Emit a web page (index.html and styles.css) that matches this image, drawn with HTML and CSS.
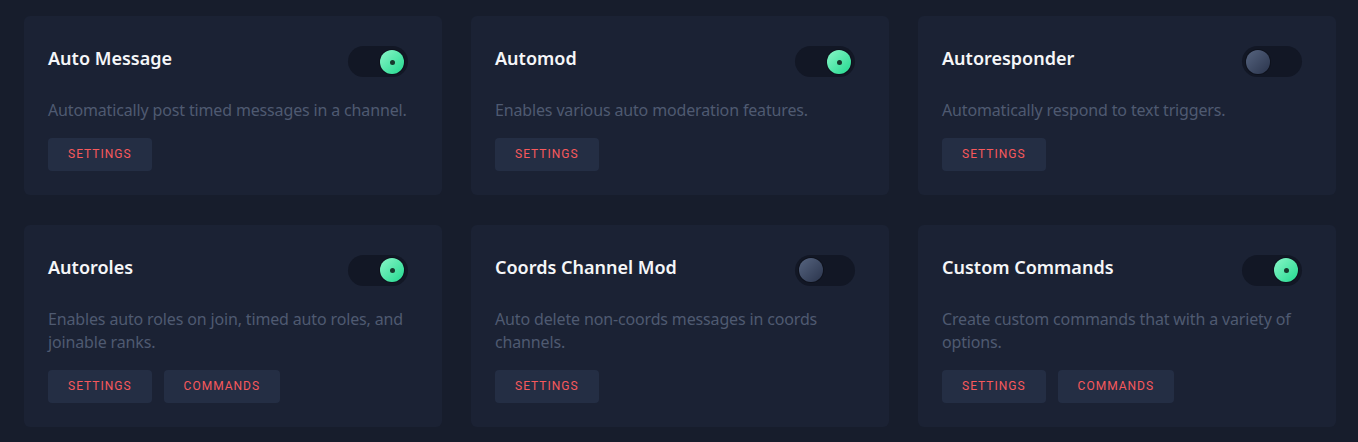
FILE: index.html
```html
<!DOCTYPE html>
<html lang="en">
<head>
<meta charset="utf-8">
<title>Plugins</title>
<link rel="stylesheet" href="styles.css">
</head>
<body>
<main class="grid">
  <section class="card">
    <div class="card-head">
      <h3 class="card-title">Auto Message</h3>
      <span class="toggle on"><span class="knob"></span></span>
    </div>
    <p class="card-desc">Automatically post timed messages in a channel.</p>
    <div class="actions"><button class="btn">Settings</button></div>
  </section>
  <section class="card">
    <div class="card-head">
      <h3 class="card-title">Automod</h3>
      <span class="toggle on"><span class="knob"></span></span>
    </div>
    <p class="card-desc">Enables various auto moderation features.</p>
    <div class="actions"><button class="btn">Settings</button></div>
  </section>
  <section class="card">
    <div class="card-head">
      <h3 class="card-title">Autoresponder</h3>
      <span class="toggle"><span class="knob"></span></span>
    </div>
    <p class="card-desc">Automatically respond to text triggers.</p>
    <div class="actions"><button class="btn">Settings</button></div>
  </section>
  <section class="card">
    <div class="card-head">
      <h3 class="card-title">Autoroles</h3>
      <span class="toggle on"><span class="knob"></span></span>
    </div>
    <p class="card-desc">Enables auto roles on join, timed auto roles, and joinable ranks.</p>
    <div class="actions"><button class="btn">Settings</button><button class="btn">Commands</button></div>
  </section>
  <section class="card">
    <div class="card-head">
      <h3 class="card-title">Coords Channel Mod</h3>
      <span class="toggle"><span class="knob"></span></span>
    </div>
    <p class="card-desc">Auto delete non-coords messages in coords channels.</p>
    <div class="actions"><button class="btn">Settings</button></div>
  </section>
  <section class="card">
    <div class="card-head">
      <h3 class="card-title">Custom Commands</h3>
      <span class="toggle on"><span class="knob"></span></span>
    </div>
    <p class="card-desc">Create custom commands that with a variety of options.</p>
    <div class="actions"><button class="btn">Settings</button><button class="btn">Commands</button></div>
  </section>
</main>
</body>
</html>
```

FILE: styles.css
```css
* { box-sizing: border-box; }
html, body {
  margin: 0;
  padding: 0;
  background: #171d2c;
  font-family: "Noto Sans", "DejaVu Sans", sans-serif;
}
.grid {
  display: grid;
  grid-template-columns: repeat(3, 418px);
  column-gap: 29px;
  row-gap: 30px;
  padding: 16px 24px;
  align-items: start;
}
.card {
  background: #1b2234;
  border-radius: 6px;
  padding: 29px 24px 24px;
  display: flex;
  flex-direction: column;
}
.card-head {
  display: flex;
  justify-content: space-between;
  align-items: flex-start;
  height: 32px;
}
.card-title {
  margin: 0;
  font-size: 18px;
  line-height: 27px;
  font-weight: 600;
  color: #f5f6f8;
}
.toggle {
  width: 60px;
  height: 31px;
  margin-top: 1px;
  margin-right: 10px;
  border-radius: 16px;
  background: #121725;
  display: flex;
  align-items: center;
  padding: 0 4px;
  justify-content: flex-start;
}
.toggle.on { justify-content: flex-end; }
.knob {
  width: 24px;
  height: 24px;
  border-radius: 50%;
  background: linear-gradient(135deg, #56647f 0%, #2a344c 100%);
  box-shadow: 0 0 0 1px rgba(0,0,0,0.25);
  position: relative;
}
.toggle.on .knob {
  background: linear-gradient(135deg, #8af6c8 0%, #22d98f 100%);
}
.toggle.on .knob::after {
  content: "";
  position: absolute;
  left: 10px;
  top: 10px;
  width: 5px;
  height: 5px;
  border-radius: 50%;
  background: #17382d;
}
.card-desc {
  margin: 22px 0 15px;
  font-size: 16px;
  line-height: 23.5px;
  letter-spacing: -0.15px;
  color: #4f5a71;
}
.actions {
  display: flex;
  gap: 12px;
}
.btn {
  font-family: Roboto, "Liberation Sans", sans-serif;
  font-size: 12px;
  font-weight: 400;
  letter-spacing: 1px;
  text-transform: uppercase;
  color: #f7595c;
  background: #242e44;
  border: 0;
  border-radius: 4px;
  height: 33px;
  padding: 0 20px;
}
```
